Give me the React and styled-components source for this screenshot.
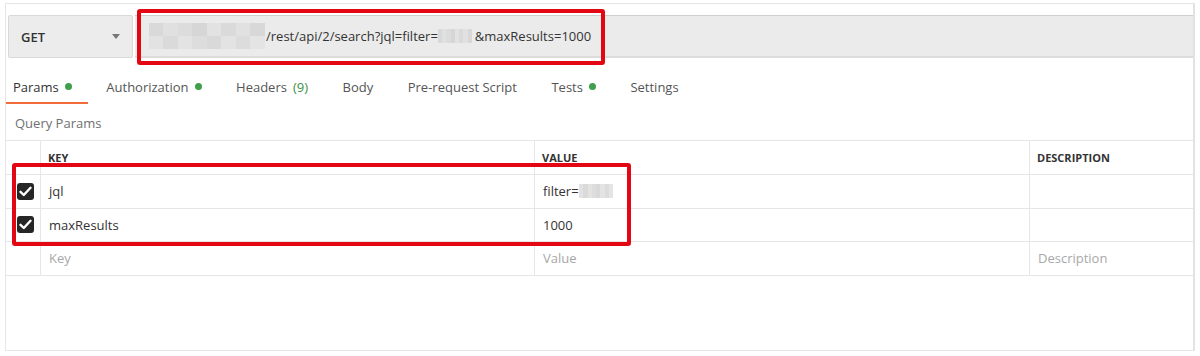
import React from "react";
import styled, { createGlobalStyle } from "styled-components";

const Global = createGlobalStyle`
  html, body { margin: 0; padding: 0; background: #fff; }
  body { font-family: "Open Sans", "Noto Sans", sans-serif; color: #333; }
  * { box-sizing: border-box; }
`;

const Frame = styled.div`
  position: relative;
  margin: 3px 0 0 5px;
  width: 1190px;
  height: 348px;
  border: 1px solid #e6e6e6;
  border-right: 2px solid #e2e2e2;
`;

const RequestBar = styled.div`
  display: flex;
  gap: 2px;
  padding: 11px 0 0 2px;
`;

const MethodSelect = styled.div`
  width: 125px;
  height: 43px;
  display: flex;
  align-items: center;
  justify-content: space-between;
  padding: 0 12px 0 12px;
  background: #ececec;
  border: 1px solid #d9d9d9;
  border-radius: 2px;
  font-size: 13px;
  font-weight: 600;
  color: #333;
`;

const Caret = styled.span`
  width: 0;
  height: 0;
  border-left: 4px solid transparent;
  border-right: 4px solid transparent;
  border-top: 5px solid #777;
`;

const UrlInput = styled.div`
  flex: 1;
  height: 43px;
  display: flex;
  align-items: center;
  padding-left: 14px;
  background: #ebebeb;
  border-top: 1px solid #cfcfcf;
  border-bottom: 2px solid #dcdcdc;
  font-size: 13px;
  color: #333;
  white-space: pre;
`;

const Blur = styled.span`
  display: inline-block;
  width: ${(p) => p.$w}px;
  height: ${(p) => p.$h}px;
  margin-right: ${(p) => p.$mr || 0}px;
  background-color: #dedede;
  background-image: linear-gradient(90deg,
    #d9d9d9 0 12%, #e0e0e0 12% 25%, #dcdcdc 25% 37%, #d6d6d6 37% 50%,
    #e2e2e2 50% 62%, #dadada 62% 75%, #e1e1e1 75% 87%, #d8d8d8 87% 100%);
`;

const BlurAlt = styled(Blur)`
  background-image: linear-gradient(90deg,
    #e2e2e2 0 12%, #dadada 12% 25%, #e3e3e3 25% 37%, #dddddd 37% 50%,
    #d9d9d9 50% 62%, #e3e3e3 62% 75%, #dcdcdc 75% 87%, #e4e4e4 87% 100%);
`;

const BlurStack = styled.span`
  display: inline-flex;
  flex-direction: column;
  margin-right: 1px;
`;

const Tabs = styled.div`
  display: flex;
  gap: 11.5px;
  margin-top: 13px;
  height: 33px;
`;

const Tab = styled.div`
  display: flex;
  align-items: center;
  gap: 6px;
  padding: 0 16px 0 7px;
  height: 33px;
  font-size: 13px;
  color: ${(p) => (p.$active ? "#333" : "#555")};
  border-bottom: 2px solid ${(p) => (p.$active ? "#f26b3a" : "transparent")};
`;

const Dot = styled.span`
  width: 7px;
  height: 7px;
  border-radius: 50%;
  background: #3f9f4a;
`;

const Count = styled.span`
  color: #3a9142;
`;

const SectionLabel = styled.div`
  height: 36px;
  display: flex;
  align-items: center;
  padding-left: 9px;
  padding-top: 2px;
  font-size: 13px;
  color: #707070;
`;

const Table = styled.div`
  display: grid;
  grid-template-columns: 34px 494px 495px 1fr;
  border-top: 1px solid #e6e6e6;
`;

const Cell = styled.div`
  height: ${(p) => (p.$head ? 34 : 33.5)}px;
  display: flex;
  align-items: ${(p) => (p.$head ? "flex-end" : "center")};
  padding: ${(p) => (p.$head ? "0 0 9px 7px" : "0 0 0 8px")};
  border-bottom: 1px solid #e6e6e6;
  border-left: ${(p) => (p.$first ? "0" : "1px solid #e6e6e6")};
  font-size: ${(p) => (p.$head ? "11px" : "13px")};
  font-weight: ${(p) => (p.$head ? 700 : 400)};
  color: ${(p) => (p.$placeholder ? "#a8a8a8" : "#333")};
  ${(p) => (p.$first ? "justify-content: center; padding: 0 0 0 4px;" : "")}
`;

const Check = styled.span`
  width: 17px;
  height: 17px;
  border-radius: 3px;
  background: #262626;
  display: flex;
  align-items: center;
  justify-content: center;
`;

const Highlight = styled.div`
  position: absolute;
  left: ${(p) => p.$x}px;
  top: ${(p) => p.$y}px;
  width: ${(p) => p.$w}px;
  height: ${(p) => p.$h}px;
  border: 4px solid #e30613;
  border-radius: 3px;
  pointer-events: none;
`;

const CheckIcon = () => (
  <svg width="13" height="11" viewBox="0 0 13 11">
    <path d="M1.5 5.8 L4.8 9 L11.5 1.8" fill="none" stroke="#fff" strokeWidth="2.4" strokeLinecap="round" strokeLinejoin="round" />
  </svg>
);

const rows = [
  { key: "jql", value: "filter=", blur: true },
  { key: "maxResults", value: "1000" },
];

export default function App() {
  return (
    <>
      <Global />
      <Frame>
        <RequestBar>
          <MethodSelect>
            GET
            <Caret />
          </MethodSelect>
          <UrlInput>
            <BlurStack>
              <Blur $w={116} $h={13} />
              <BlurAlt $w={116} $h={13} />
            </BlurStack>
            /rest/api/2/search?jql=filter=
            <Blur $w={34} $h={14} $mr={3} />
            &amp;maxResults=1000
          </UrlInput>
        </RequestBar>
        <Tabs>
          <Tab $active>Params <Dot /></Tab>
          <Tab>Authorization <Dot /></Tab>
          <Tab>Headers <Count>(9)</Count></Tab>
          <Tab>Body</Tab>
          <Tab>Pre-request Script</Tab>
          <Tab>Tests <Dot /></Tab>
          <Tab>Settings</Tab>
        </Tabs>
        <SectionLabel>Query Params</SectionLabel>
        <Table>
          <Cell $head $first />
          <Cell $head>KEY</Cell>
          <Cell $head>VALUE</Cell>
          <Cell $head>DESCRIPTION</Cell>
          {rows.map((r) => (
            <React.Fragment key={r.key}>
              <Cell $first>
                <Check><CheckIcon /></Check>
              </Cell>
              <Cell>{r.key}</Cell>
              <Cell>
                {r.value}
                {r.blur && <BlurAlt $w={34} $h={14} />}
              </Cell>
              <Cell />
            </React.Fragment>
          ))}
          <Cell $first />
          <Cell $placeholder>Key</Cell>
          <Cell $placeholder>Value</Cell>
          <Cell $placeholder>Description</Cell>
        </Table>
        <Highlight $x={131} $y={5} $w={468} $h={56} />
        <Highlight $x={6} $y={159} $w={619} $h={83} />
      </Frame>
    </>
  );
}
